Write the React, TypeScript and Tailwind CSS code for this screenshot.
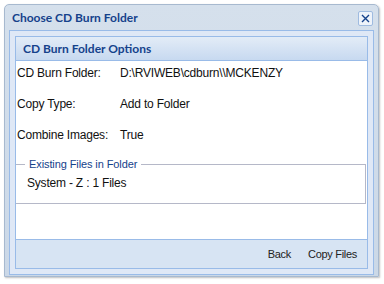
import React from "react";

export default function App() {
  const font = { fontFamily: '"Liberation Sans", Arial, sans-serif' };
  const bold = { fontFamily: 'Lato, "Liberation Sans", sans-serif' };
  return (
    <div className="w-[384px] h-[284px] bg-white relative" style={font}>
      <div className="absolute left-[4px] top-[4px] w-[375px] h-[273px] rounded-t-[5px] border border-[#a7b9cf] bg-gradient-to-b from-[#d5e0ec] to-[#cbd8e7] px-[4px] pb-[1px] flex flex-col shadow-[1px_1px_2px_rgba(0,0,0,0.25)]">
        <div className="h-[25px] flex items-center pl-[3px] pr-[1px] shrink-0">
          <span className="text-[12px] font-bold text-[#15428b] flex-1" style={bold}>Choose CD Burn Folder</span>
          <div className="w-[15px] h-[15px] border border-[#9fbbe0] bg-[#eef3fa] rounded-[2px] flex items-center justify-center mt-[1px]">
            <svg width="9" height="9" viewBox="0 0 9 9">
              <path d="M1 1 L8 8 M8 1 L1 8" stroke="#15428b" strokeWidth="1.4" />
            </svg>
          </div>
        </div>
        <div className="flex-1 border border-[#99bbe8] bg-[#dfe8f6] p-[5px] flex flex-col">
          <div className="flex-1 border border-[#99bbe8] flex flex-col bg-white">
            <div className="h-[24px] shrink-0 bg-gradient-to-b from-[#e3ecf7] to-[#c7d9f0] border-b border-[#99bbe8] flex items-center pl-[7px]">
              <span className="text-[12px] font-bold text-[#15428b]" style={bold}>CD Burn Folder Options</span>
            </div>
            <div className="flex-1 flex flex-col text-[12px] text-[#111] tracking-[-0.2px]">
              <div className="flex flex-col gap-[15px] mt-[4px] pl-[1px]">
                <div className="flex h-[16px] items-center">
                  <span className="w-[103px]">CD Burn Folder:</span>
                  <span>D:\RVIWEB\cdburn\\MCKENZY</span>
                </div>
                <div className="flex h-[16px] items-center">
                  <span className="w-[103px]">Copy Type:</span>
                  <span>Add to Folder</span>
                </div>
                <div className="flex h-[16px] items-center">
                  <span className="w-[103px]">Combine Images:</span>
                  <span>True</span>
                </div>
              </div>
              <fieldset className="mt-[14px] border border-[#b5b8c8] border-l-0 mr-[1px] pb-[12px]">
                <legend className="ml-[9px] px-[4px] text-[11px] tracking-[-0.1px] text-[#15428b] leading-[14px]">Existing Files in Folder</legend>
                <div className="mt-[4px] pl-[11px] h-[16px] flex items-center">System - Z : 1 Files</div>
              </fieldset>
            </div>
            <div className="h-[29px] shrink-0 bg-[#d7e4f3] border-t border-[#99bbe8] flex items-center justify-end gap-[17px] pr-[10px] text-[11px] tracking-[-0.3px] text-[#222]">
              <span>Back</span>
              <span>Copy Files</span>
            </div>
          </div>
        </div>
      </div>
    </div>
  );
}
